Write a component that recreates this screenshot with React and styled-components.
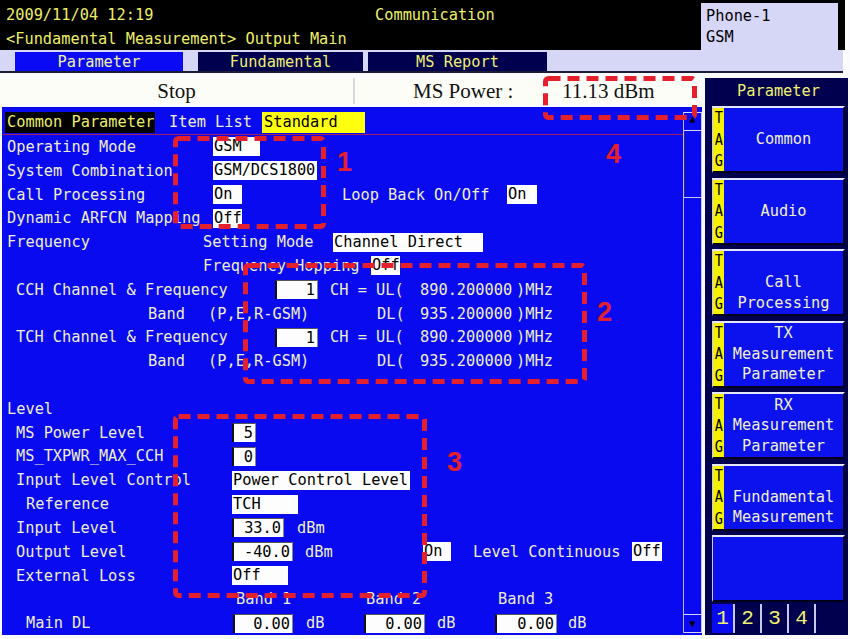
import React from 'react';
import styled, { createGlobalStyle } from 'styled-components';

const MONO = `"DejaVu Sans Mono", "Liberation Mono", monospace`;

const GlobalStyle = createGlobalStyle`
  html, body {
    margin: 0;
    padding: 0;
    background: #fff;
  }
  * {
    box-sizing: border-box;
  }
`;

const Screen = styled.div`
  position: relative;
  width: 850px;
  height: 639px;
  background: #fbfbfd;
  overflow: hidden;
  font-family: ${MONO};
  font-size: 15.3px;
`;

/* ---------- title bar ---------- */

const Header = styled.div`
  display: flex;
  width: 845px;
  height: 50px;
  background: #000;
`;

const HeaderInfo = styled.div`
  flex: 1;
  padding: 3px 0 0 6px;
  color: #eeee66;
  line-height: 24px;
`;

const HeaderLine = styled.div`
  display: flex;
  white-space: pre;
`;

const Slot = styled.div`
  flex: none;
  width: ${(p) => (p.$w ? `${p.$w}px` : 'auto')};
  white-space: pre;
  overflow: hidden;
`;

const PhoneBox = styled.div`
  width: 137px;
  margin: 3px 7px 0 0;
  padding: 3px 0 0 5px;
  background: #d6d6f6;
  color: #000;
  line-height: 21px;
`;

const TabRow = styled.div`
  display: flex;
  width: 843px;
  height: 23px;
  padding: 2px 0 0 15px;
  background: #d6d6f6;
  border-bottom: 2px solid #1c1c34;
`;

const Tab = styled.div`
  width: ${(p) => p.$w}px;
  margin-left: ${(p) => p.$gap || 0}px;
  height: 19px;
  line-height: 20px;
  text-align: center;
  background: ${(p) => (p.$active ? '#0a0af4' : '#00004e')};
  color: ${(p) => (p.$active ? '#f2f2a0' : '#f0f070')};
`;

/* ---------- body ---------- */

const Body = styled.div`
  display: flex;
  margin-top: 5px;
`;

const LeftCol = styled.div`
  width: 703px;
  display: flex;
  flex-direction: column;
`;

const StatusRow = styled.div`
  display: flex;
  height: 26px;
  background: #fdfdf8;
  font-family: "Liberation Serif", serif;
  font-size: 21px;
  line-height: 26px;
  color: #111;
`;

const StatusCell = styled.div`
  width: ${(p) => (p.$w ? `${p.$w}px` : 'auto')};
  flex: ${(p) => (p.$w ? 'none' : 1)};
  padding-left: ${(p) => p.$pl || 0}px;
  text-align: ${(p) => (p.$center ? 'center' : 'left')};
  border-right: ${(p) => (p.$divider ? '2px solid #d9d9dc' : 'none')};
  white-space: pre;
`;

const Panel = styled.div`
  display: flex;
  width: 700px;
  height: 528px;
  margin: 3px 0 0 2px;
  background: #0a0af0;
`;

const PanelContent = styled.div`
  width: 681px;
  padding-top: 5px;
  display: flex;
  flex-direction: column;
`;

const TopRow = styled.div`
  display: flex;
  align-items: center;
  height: 23px;
  padding: 0 0 1px 3px;
  border-bottom: 1px solid #a8205a;
  color: #eeeed0;
`;

const ModeTag = styled.div`
  width: ${(p) => p.$w}px;
  margin-left: ${(p) => p.$gap || 0}px;
  height: 21px;
  line-height: 21px;
  padding-left: 2px;
  white-space: pre;
  background: ${(p) => p.$bg || 'transparent'};
  color: ${(p) => p.$fg || '#eeeed0'};
`;

const Row = styled.div`
  display: flex;
  align-items: center;
  height: 23.85px;
  padding-left: ${(p) => p.$pl}px;
  color: #eeeed0;
`;

const Label = styled.span`
  display: inline-block;
  max-width: ${(p) => (p.$clip ? `${p.$clip}px` : 'none')};
  overflow: hidden;
  vertical-align: top;
  white-space: pre;
`;

const Field = styled.div`
  width: ${(p) => p.$w}px;
  height: 19px;
  line-height: 19px;
  padding: 0 2px 0 1px;
  background: #fdfdfd;
  color: #000;
  white-space: pre;
  text-align: ${(p) => (p.$num ? 'right' : 'left')};
  border-left: ${(p) => (p.$num ? '2px solid #111' : 'none')};
  border-top: ${(p) => (p.$num ? '1px solid #555' : 'none')};
  border-right: ${(p) => (p.$num ? '1px solid #888' : 'none')};
`;

const ScrollBar = styled.div`
  width: 19px;
  margin: 5px 0 2px;
  display: flex;
  flex-direction: column;
  border-left: 1px solid #b8b8ec;
  border-right: 1px solid #c8c8f0;
`;

const ScrollArrow = styled.div`
  height: 19px;
  display: flex;
  align-items: ${(p) => (p.$down ? 'center' : 'flex-start')};
  justify-content: center;
  border-top: 1px solid #d6d6f6;
  border-bottom: 1px solid #d6d6f6;
  color: #000;
  font-size: 10px;
  line-height: 12px;
`;

const ScrollThumb = styled.div`
  height: 67px;
  border-bottom: 1px solid #c8c8f0;
  box-shadow: inset 1px 0 0 #2a2a80;
`;

const ScrollSpace = styled.div`
  flex: 1;
`;

/* ---------- soft keys ---------- */

const SoftPanel = styled.div`
  width: 143px;
  height: 557px;
  margin-left: 2px;
  padding: 0 3px 2px 7px;
  background: #00004e;
  display: flex;
  flex-direction: column;
`;

const SoftTitle = styled.div`
  height: 28px;
  line-height: 26px;
  text-align: center;
  color: #f0f070;
`;

const KeyStack = styled.div`
  display: flex;
  flex-direction: column;
  gap: 4.5px;
`;

const Key = styled.div`
  display: flex;
  height: 67px;
  background: #0c12ee;
  border-top: 2px solid #e6e6ff;
  border-left: 1px solid #c8c8f0;
  border-right: 2px solid #00001c;
  border-bottom: 2px solid #00001c;
`;

const TagStrip = styled.div`
  width: 11px;
  display: flex;
  flex-direction: column;
  justify-content: space-between;
  align-items: center;
  padding: 0;
  background: #f4f000;
  color: #000;
  font-size: 16px;
  line-height: 20px;
  transform-origin: left center;
`;

const TagLetter = styled.span`
  display: block;
  transform: scaleX(0.85);
`;

const KeyLabel = styled.div`
  flex: 1;
  display: flex;
  flex-direction: column;
  justify-content: center;
  align-items: center;
  color: #f0f0d0;
  line-height: 20.5px;
  white-space: pre;
`;

const PageTabs = styled.div`
  display: flex;
  height: 29px;
  margin-top: 2px;
  font-family: "Liberation Mono", monospace;
  font-size: 21px;
  line-height: 29px;
  color: #f0f070;
`;

const PageTab = styled.div`
  width: ${(p) => (p.$first ? 23 : 27)}px;
  text-align: center;
  background: ${(p) => (p.$active ? '#0a0af0' : 'transparent')};
  border-right: 2px solid #c8c8e8;
`;

/* ---------- red call-out marks drawn over the screen ---------- */

const Mark = styled.div`
  position: absolute;
  left: ${(p) => p.$x}px;
  top: ${(p) => p.$y}px;
  width: ${(p) => p.$w}px;
  height: ${(p) => p.$h}px;
  pointer-events: none;
`;

const MarkNum = styled.div`
  position: absolute;
  left: ${(p) => p.$x}px;
  top: ${(p) => p.$y}px;
  font-family: "Liberation Sans", Arial, sans-serif;
  font-weight: bold;
  font-size: 27px;
  line-height: 1;
  color: #e4202c;
`;

function DashBox({ x, y, w, h }) {
  return (
    <Mark $x={x} $y={y} $w={w} $h={h}>
      <svg width={w} height={h}>
        <rect
          x="2.5"
          y="2.5"
          width={w - 5}
          height={h - 5}
          rx="3"
          fill="none"
          stroke="#e4202c"
          strokeWidth="5"
          strokeDasharray="12 7"
        />
      </svg>
    </Mark>
  );
}

const ROWS = [
  [{ x: 7, t: 'Operating Mode' }, { x: 213, f: 'GSM', w: 47 }],
  [{ x: 7, t: 'System Combination', clip: 167 }, { x: 213, f: 'GSM/DCS1800', w: 104 }],
  [
    { x: 7, t: 'Call Processing' },
    { x: 213, f: 'On', w: 29 },
    { x: 342, t: 'Loop Back On/Off' },
    { x: 507, f: 'On', w: 30 },
  ],
  [{ x: 7, t: 'Dynamic ARFCN Mapping' }, { x: 213, f: 'Off', w: 29 }],
  [{ x: 7, t: 'Frequency' }, { x: 203, t: 'Setting Mode' }, { x: 333, f: 'Channel Direct', w: 150 }],
  [{ x: 203, t: 'Frequency Hopping' }, { x: 371, f: 'Off', w: 29 }],
  [
    { x: 16, t: 'CCH Channel & Frequency' },
    { x: 275, n: '1', w: 43 },
    { x: 330, t: 'CH = UL(' },
    { x: 420, t: '890.200000' },
    { x: 516, t: ')MHz' },
  ],
  [{ x: 148, t: 'Band' }, { x: 208, t: '(P,E,R-GSM)' }, { x: 377, t: 'DL(' }, { x: 420, t: '935.200000' }, { x: 516, t: ')MHz' }],
  [
    { x: 16, t: 'TCH Channel & Frequency' },
    { x: 275, n: '1', w: 43 },
    { x: 330, t: 'CH = UL(' },
    { x: 420, t: '890.200000' },
    { x: 516, t: ')MHz' },
  ],
  [{ x: 148, t: 'Band' }, { x: 208, t: '(P,E,R-GSM)' }, { x: 377, t: 'DL(' }, { x: 420, t: '935.200000' }, { x: 516, t: ')MHz' }],
  [],
  [{ x: 7, t: 'Level' }],
  [{ x: 16, t: 'MS Power Level' }, { x: 232, n: '5', w: 24 }],
  [{ x: 16, t: 'MS_TXPWR_MAX_CCH' }, { x: 232, n: '0', w: 24 }],
  [{ x: 16, t: 'Input Level Control' }, { x: 232, f: 'Power Control Level', w: 178 }],
  [{ x: 26, t: 'Reference' }, { x: 232, f: 'TCH', w: 66 }],
  [{ x: 16, t: 'Input Level' }, { x: 232, n: '33.0', w: 52 }, { x: 297, t: 'dBm' }],
  [
    { x: 16, t: 'Output Level' },
    { x: 232, n: '-40.0', w: 61 },
    { x: 305, t: 'dBm' },
    { x: 423, f: 'On', w: 28 },
    { x: 473, t: 'Level Continuous' },
    { x: 632, f: 'Off', w: 30 },
  ],
  [{ x: 16, t: 'External Loss' }, { x: 232, f: 'Off', w: 56 }],
  [{ x: 236, t: 'Band 1' }, { x: 366, t: 'Band 2' }, { x: 498, t: 'Band 3' }],
  [
    { x: 26, t: 'Main DL' },
    { x: 233, n: '0.00', w: 60 },
    { x: 306, t: 'dB' },
    { x: 364, n: '0.00', w: 61 },
    { x: 437, t: 'dB' },
    { x: 495, n: '0.00', w: 62 },
    { x: 568, t: 'dB' },
  ],
];

const KEYS = [
  { tag: true, lines: ['Common'] },
  { tag: true, lines: ['Audio'] },
  { tag: true, lines: [' ', 'Call', 'Processing'] },
  { tag: true, lines: ['TX', 'Measurement', 'Parameter'] },
  { tag: true, lines: ['RX', 'Measurement', 'Parameter'] },
  { tag: true, lines: [' ', 'Fundamental', 'Measurement'] },
  { tag: false, lines: [] },
];

// left edge of the panel text area
const PANEL_X = 2;

function SettingRow({ cells }) {
  const first = cells.length ? cells[0].x : PANEL_X;
  return (
    <Row $pl={first - PANEL_X}>
      {cells.map((c, i) => {
        const next = cells[i + 1];
        const w = next ? next.x - c.x : undefined;
        let inner;
        if (c.f !== undefined) inner = <Field $w={c.w}>{c.f}</Field>;
        else if (c.n !== undefined) inner = <Field $w={c.w} $num>{c.n}</Field>;
        else inner = <Label $clip={c.clip}>{c.t}</Label>;
        return (
          <Slot key={i} $w={w}>
            {inner}
          </Slot>
        );
      })}
    </Row>
  );
}

function SoftKey({ tag, lines }) {
  return (
    <Key>
      {tag && (
        <TagStrip>
          <TagLetter>T</TagLetter>
          <TagLetter>A</TagLetter>
          <TagLetter>G</TagLetter>
        </TagStrip>
      )}
      <KeyLabel>
        {lines.map((l, i) => (
          <div key={i}>{l}</div>
        ))}
      </KeyLabel>
    </Key>
  );
}

export default function App() {
  return (
    <Screen>
      <GlobalStyle />
      <Header>
        <HeaderInfo>
          <HeaderLine>
            <Slot $w={369}>2009/11/04 12:19</Slot>
            <Slot>Communication</Slot>
          </HeaderLine>
          <HeaderLine>&lt;Fundamental Measurement&gt; Output Main</HeaderLine>
        </HeaderInfo>
        <PhoneBox>
          <div>Phone-1</div>
          <div>GSM</div>
        </PhoneBox>
      </Header>

      <TabRow>
        <Tab $w={168} $active>Parameter</Tab>
        <Tab $w={165} $gap={15}>Fundamental</Tab>
        <Tab $w={179} $gap={5}>MS Report</Tab>
      </TabRow>

      <Body>
        <LeftCol>
          <StatusRow>
            <StatusCell $w={355} $center $divider>Stop</StatusCell>
            <StatusCell $w={187} $pl={58}>MS Power :</StatusCell>
            <StatusCell $pl={20}>11.13 dBm</StatusCell>
          </StatusRow>

          <Panel>
            <PanelContent>
              <TopRow>
                <ModeTag $w={150} $bg="#000" $fg="#eeee66">Common Parameter</ModeTag>
                <ModeTag $w={95} $gap={12}>Item List</ModeTag>
                <ModeTag $w={103} $bg="#ffff10" $fg="#000">Standard</ModeTag>
              </TopRow>
              {ROWS.map((cells, i) => (
                <SettingRow key={i} cells={cells} />
              ))}
            </PanelContent>
            <ScrollBar>
              <ScrollArrow>▲</ScrollArrow>
              <ScrollThumb />
              <ScrollSpace />
              <ScrollArrow $down>▼</ScrollArrow>
            </ScrollBar>
          </Panel>
        </LeftCol>

        <SoftPanel>
          <SoftTitle>Parameter</SoftTitle>
          <KeyStack>
            {KEYS.map((k, i) => (
              <SoftKey key={i} tag={k.tag} lines={k.lines} />
            ))}
          </KeyStack>
          <PageTabs>
            <PageTab $first $active>1</PageTab>
            <PageTab>2</PageTab>
            <PageTab>3</PageTab>
            <PageTab>4</PageTab>
          </PageTabs>
        </SoftPanel>
      </Body>

      <DashBox x={173} y={136} w={153} h={93} />
      <DashBox x={243} y={263} w={344} h={121} />
      <DashBox x={173} y={414} w={254} h={184} />
      <DashBox x={543} y={76} w={154} h={44} />
      <MarkNum $x={337} $y={149}>1</MarkNum>
      <MarkNum $x={597} $y={299}>2</MarkNum>
      <MarkNum $x={447} $y={449}>3</MarkNum>
      <MarkNum $x={606} $y={141}>4</MarkNum>
    </Screen>
  );
}
